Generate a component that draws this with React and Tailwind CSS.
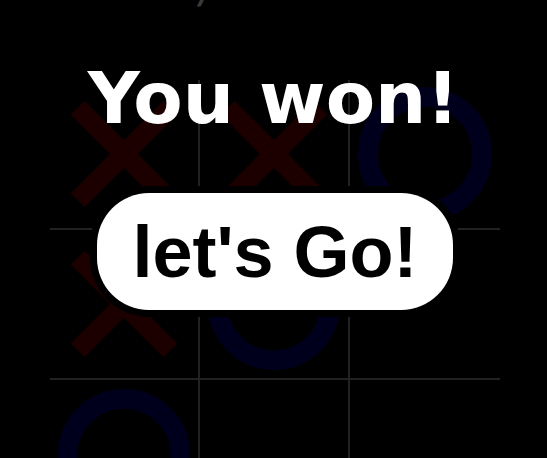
import React from 'react';

const BOARD = ['x', 'x', 'o', 'x', 'o', '', 'o', '', ''];

function Mark({ v }) {
  if (v === 'x') {
    return (
      <svg width="150" height="150" viewBox="0 0 150 150">
        <line x1="28" y1="28" x2="122" y2="122" stroke="#1c0000" strokeWidth="20" />
        <line x1="122" y1="28" x2="28" y2="122" stroke="#1c0000" strokeWidth="20" />
      </svg>
    );
  }
  if (v === 'o') {
    return (
      <svg width="150" height="150" viewBox="0 0 150 150">
        <circle cx="75" cy="75" r="57" fill="none" stroke="#00001c" strokeWidth="20" />
      </svg>
    );
  }
  return null;
}

export default function App() {
  return (
    <div className="relative h-[458px] w-[547px] overflow-hidden bg-black">
      {/* title above board, scrolled mostly out of view */}
      <div className="flex h-[10px] items-end overflow-hidden pl-[200px]">
        <div className="text-[44px] leading-none text-[#3a3a3a] italic" style={{ fontFamily: '"DejaVu Sans", sans-serif' }}>
          /
        </div>
      </div>

      <div className="pl-[50px] pt-[70px]">
        <div className="grid grid-cols-[150px_150px_150px]">
          {BOARD.map((v, i) => (
            <div
              key={i}
              className={`flex h-[150px] w-[150px] items-center justify-center border-[#222] ${i % 3 < 2 ? 'border-r-2' : ''} ${i < 6 ? 'border-b-2' : ''}`}
            >
              <Mark v={v} />
            </div>
          ))}
        </div>
      </div>

      <div className="absolute inset-0 flex flex-col items-center">
        <h1
          className="mt-[62px] text-[72px] font-bold leading-none text-white"
          style={{ fontFamily: '"DejaVu Sans", sans-serif' }}
        >
          You won!
        </h1>
        <button
          className="mt-[59px] ml-[3px] flex h-[117px] w-[356px] items-center justify-center rounded-[52px] bg-white text-[72px] font-bold leading-none text-black shadow-[0_0_0_7px_#000]"
          style={{ fontFamily: '"Liberation Sans", Arial, sans-serif' }}
        >
          let's Go!
        </button>
      </div>
    </div>
  );
}
